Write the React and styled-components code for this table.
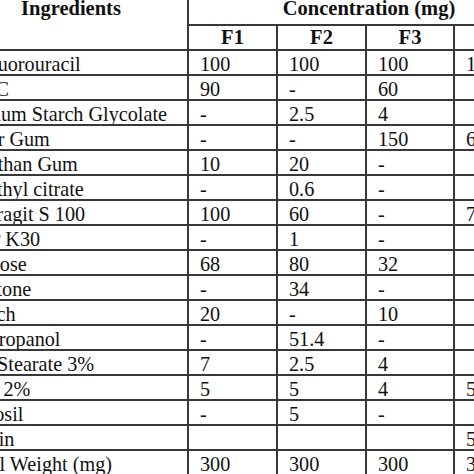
import React from "react";
import styled, { createGlobalStyle } from "styled-components";

const GlobalStyle = createGlobalStyle`
  html, body {
    margin: 0;
    padding: 0;
    background: #ffffff;
    overflow: hidden;
  }
`;

const Viewport = styled.div`
  width: 474px;
  height: 474px;
  overflow: hidden;
  background: #ffffff;
`;

const Table = styled.div`
  display: grid;
  grid-template-columns: 232px 87px 87px 86px 94px;
  grid-template-rows: 24px 23px;
  grid-auto-rows: 23px;
  gap: 2px;
  width: max-content;
  margin-left: -45px;
  background: #383838;
  font-family: "Liberation Serif", "Times New Roman", serif;
  color: #111111;
`;

const HeadCell = styled.div`
  display: flex;
  justify-content: center;
  align-items: ${(p) => (p.$top ? "flex-start" : "center")};
  background: #ffffff;
  font-weight: 700;
  font-size: 20.5px;
  line-height: ${(p) => (p.$top ? "16px" : "23px")};
  white-space: nowrap;
  grid-row: ${(p) => (p.$rowSpan ? `span ${p.$rowSpan}` : "auto")};
  grid-column: ${(p) => (p.$colSpan ? `span ${p.$colSpan}` : "auto")};
`;

const Cell = styled.div`
  background: #ffffff;
  font-size: 20.2px;
  line-height: 20px;
  padding: 3px 0 0 ${(p) => (p.$first ? "9px" : "11px")};
  white-space: nowrap;
  overflow: hidden;
`;

const rows = [
  ["5-Fluorouracil", "100", "100", "100", "100"],
  ["MCC", "90", "-", "60", ""],
  ["Sodium Starch Glycolate", "-", "2.5", "4", ""],
  ["Guar Gum", "-", "-", "150", "60"],
  ["Xanthan Gum", "10", "20", "-", ""],
  ["Triethyl citrate", "-", "0.6", "-", ""],
  ["Eudragit S 100", "100", "60", "-", "75"],
  ["PVP K30", "-", "1", "-", ""],
  ["Lactose", "68", "80", "32", ""],
  ["Acetone", "-", "34", "-", ""],
  ["Starch", "20", "-", "10", ""],
  ["Isopropanol", "-", "51.4", "-", ""],
  ["Mg Stearate 3%", "7", "2.5", "4", ""],
  ["Talc 2%", "5", "5", "4", "5"],
  ["Aerosil", "-", "5", "-", ""],
  ["Pectin", "", "", "", "5"],
  ["Total Weight (mg)", "300", "300", "300", "300"],
];

export default function App() {
  return (
    <>
      <GlobalStyle />
      <Viewport>
        <Table>
          <HeadCell $top $rowSpan={2}>Ingredients</HeadCell>
          <HeadCell $top $colSpan={4}>Concentration (mg)</HeadCell>
          <HeadCell>F1</HeadCell>
          <HeadCell>F2</HeadCell>
          <HeadCell>F3</HeadCell>
          <HeadCell>F4</HeadCell>
          {rows.map((r, i) =>
            r.map((v, j) => (
              <Cell key={`${i}-${j}`} $first={j === 0}>
                {v}
              </Cell>
            ))
          )}
        </Table>
      </Viewport>
    </>
  );
}
